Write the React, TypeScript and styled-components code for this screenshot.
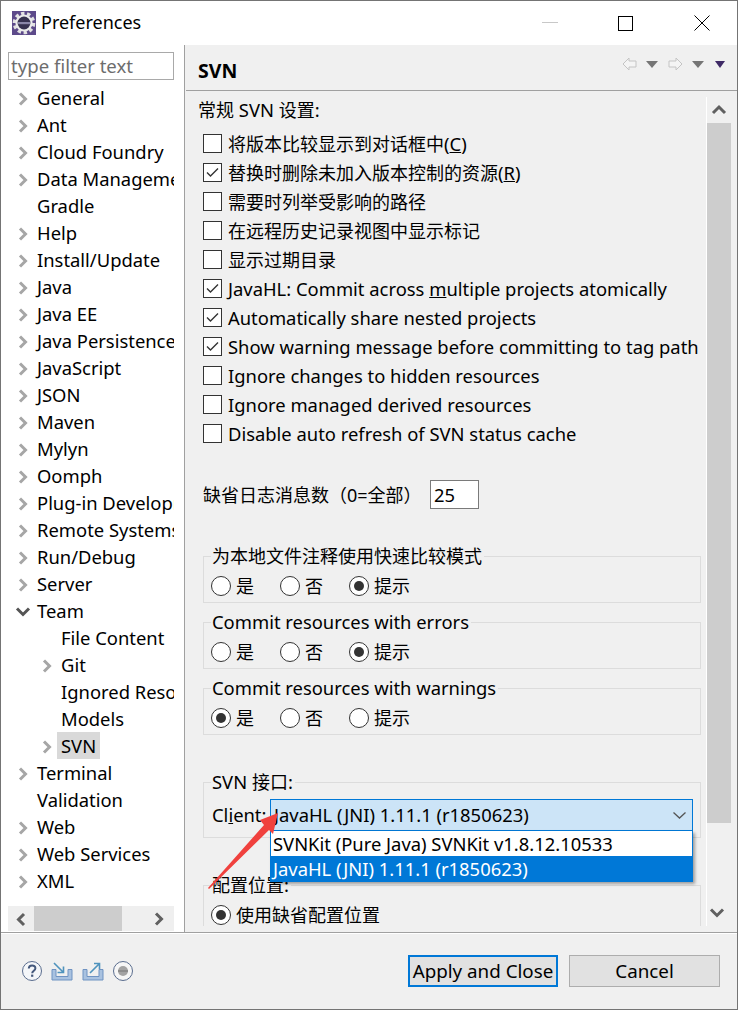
import React from "react";
import styled, { createGlobalStyle } from "styled-components";

const FONT = `"Noto Sans", "Noto Sans CJK SC", sans-serif`;

const GlobalStyle = createGlobalStyle`
    html, body {
        margin: 0;
        padding: 0;
        background: #f0f0f0;
    }
    body {
        font-family: ${FONT};
        font-size: 18.4px;
        line-height: 24px;
        color: #000;
    }
`;

/**
 * Window frame:
 */
const Window = styled.div`
    width: 738px;
    height: 1010px;
    box-sizing: border-box;
    border: 1px solid #747474;
    display: flex;
    flex-direction: column;
    overflow: hidden;
    position: relative;
    background: #f0f0f0;
`,
    TitleBar = styled.div`
    height: 44px;
    flex: none;
    background: #fff;
    display: flex;
    align-items: center;
    padding-left: 11px;
    gap: 5px;
`,
    TitleText = styled.span`
    flex: 1;
    font-size: 18px;
    margin-top: -2px;
`,
    WinButton = styled.div`
    width: 71px;
    height: 44px;
    display: flex;
    align-items: center;
    justify-content: center;
`,
    Body = styled.div`
    flex: 1;
    display: flex;
    min-height: 0;
`,
    // CJK glyphs sit on an 18px em in the dialog, latin runs slightly wider
    Cjk = styled.span`
    font-size: 18px;
`;

/**
 * Left tree panel:
 */
const LeftPanel = styled.div`
    width: 184px;
    flex: none;
    box-sizing: border-box;
    background: #fff;
    border-right: 1px solid #a0a0a0;
    padding: 7px 9px 1px 7px;
    display: flex;
    flex-direction: column;
`,
    FilterInput = styled.input`
    height: 28px;
    flex: none;
    box-sizing: border-box;
    width: 166px;
    border: 1px solid #a9a9a9;
    padding: 0 2px 2px;
    margin: 0;
    font-family: ${FONT};
    font-size: 18.6px;
    outline: none;
    &::placeholder {
        color: #6d6d6d;
        opacity: 1;
    }
`,
    Tree = styled.div`
    flex: 1;
    width: 166px;
    min-height: 0;
    overflow: hidden;
    padding-top: 4px;
`,
    TreeRow = styled.div<{ $level: number }>`
    height: 27px;
    display: flex;
    align-items: center;
    white-space: nowrap;
    padding-left: ${(p) => 10 + p.$level * 24}px;
`,
    TwistySlot = styled.span`
    width: 19px;
    flex: none;
    display: flex;
    align-items: center;
    margin-top: 2px;
`,
    TreeLabel = styled.span<{ $selected?: boolean }>`
    height: 27px;
    line-height: 27px;
    padding: 0 4px;
    margin-left: -4px;
    background: ${(p) => (p.$selected ? "#d9d9d9" : "transparent")};
`,
    HScroll = styled.div`
    height: 25px;
    width: 166px;
    flex: none;
    background: #efefef;
    display: flex;
    align-items: center;
`,
    HScrollButton = styled.div`
    width: 26px;
    flex: none;
    display: flex;
    align-items: center;
    justify-content: center;
`,
    HScrollThumb = styled.div`
    width: 88px;
    height: 100%;
    flex: none;
    background: #cdcdcd;
`,
    HScrollSpace = styled.div`
    flex: 1;
`;

/**
 * Right page:
 */
const RightPanel = styled.div`
    flex: 1;
    min-width: 0;
    display: flex;
    flex-direction: column;
`,
    PageHeader = styled.div`
    height: 46px;
    flex: none;
    box-sizing: border-box;
    border-bottom: 1px solid #a0a0a0;
    margin-left: 1px;
    display: flex;
    align-items: center;
    padding: 0 12px;
`,
    PageTitle = styled.div`
    flex: 1;
    font-size: 19.5px;
    font-weight: 700;
    margin-top: 6px;
`,
    Toolbar = styled.div`
    display: flex;
    align-items: center;
    gap: 10px;
    margin-top: -7px;
`,
    ToolGroup = styled.div`
    display: flex;
    align-items: center;
    gap: 9px;
`,
    ViewMenu = styled.div`
    display: flex;
    margin-left: 1px;
`,
    NavSvg = styled.svg<{ $flip?: boolean }>`
    transform: ${(p) => (p.$flip ? "scaleX(-1)" : "none")};
`,
    PageBody = styled.div`
    flex: 1;
    min-height: 0;
    display: flex;
    padding-bottom: 6px;
`,
    Scroller = styled.div`
    flex: 1;
    min-width: 0;
    overflow: hidden;
    padding: 7px 0 0 13px;
`,
    Heading = styled.div`
    height: 24px;
`,
    CheckList = styled.div`
    margin: 7px 0 0 5px;
`,
    CheckRow = styled.div`
    height: 29px;
    display: flex;
    align-items: center;
    gap: 6px;
    white-space: nowrap;
`,
    CheckBox = styled.span`
    width: 19px;
    height: 19px;
    flex: none;
    box-sizing: border-box;
    background: #fff;
    border: 1px solid #333;
    display: flex;
    align-items: center;
    justify-content: center;
`,
    LogRow = styled.div`
    margin: 32px 0 0 5px;
    display: flex;
    align-items: center;
    height: 29px;
`,
    LogLabel = styled.span`
    width: 227px;
    flex: none;
    white-space: nowrap;
`,
    NumberInput = styled.input`
    width: 49px;
    height: 29px;
    box-sizing: border-box;
    border: 1px solid #7a7a7a;
    padding: 0 3px;
    margin: 0;
    font-family: ${FONT};
    font-size: 18.4px;
    outline: none;
`,
    Groups = styled.div<{ $top: number }>`
    margin: ${(p) => p.$top}px 0 0 5px;
    width: 498px;
    display: flex;
    flex-direction: column;
    gap: 7px;
`,
    Group = styled.fieldset<{ $bottom?: number }>`
    margin: 0;
    padding: 5px 7px ${(p) => p.$bottom ?? 4}px 7px;
    border: 1px solid #dcdcdc;
    min-width: 0;
`,
    GroupLegend = styled.legend`
    padding: 0 2px 0 1px;
    margin-left: 0;
    line-height: 24px;
    white-space: nowrap;
`,
    RadioRow = styled.div`
    display: flex;
    height: 25px;
    align-items: center;
`,
    RadioItem = styled.label<{ $auto?: boolean }>`
    width: ${(p) => (p.$auto ? "auto" : "69px")};
    display: flex;
    align-items: center;
    gap: 5px;
    font-size: 18px;
`,
    RadioDot = styled.span<{ $on?: boolean }>`
    width: 20px;
    height: 20px;
    flex: none;
    box-sizing: border-box;
    border-radius: 50%;
    border: 1px solid #333;
    background: #fff;
    display: flex;
    align-items: center;
    justify-content: center;
    &::after {
        content: "";
        display: ${(p) => (p.$on ? "block" : "none")};
        width: 10px;
        height: 10px;
        border-radius: 50%;
        background: #333;
    }
`,
    ClientRow = styled.div`
    display: flex;
    align-items: center;
    height: 32px;
`,
    ClientLabel = styled.span`
    width: 58px;
    padding-left: 1px;
    flex: none;
    white-space: nowrap;
`,
    ComboWrap = styled.div`
    position: relative;
    width: 423px;
    flex: none;
`,
    Combo = styled.div`
    height: 32px;
    box-sizing: border-box;
    border: 1px solid #0078d7;
    background: #cce4f7;
    display: flex;
    align-items: center;
    justify-content: space-between;
    padding: 0 6px 0 3px;
`,
    DropList = styled.div`
    position: absolute;
    top: 32px;
    left: 0;
    right: 0;
    background: #fff;
    border: 1px solid #0078d7;
    border-top: none;
    box-shadow: 2px 2px 3px rgba(0, 0, 0, 0.35);
    z-index: 2;
`,
    DropItem = styled.div<{ $active?: boolean }>`
    height: 25px;
    line-height: 26px;
    padding-left: 2px;
    background: ${(p) => (p.$active ? "#0078d7" : "#fff")};
    color: ${(p) => (p.$active ? "#fff" : "#000")};
`,
    VScroll = styled.div`
    width: 25px;
    flex: none;
    box-sizing: border-box;
    margin: 6px 6px 0 5px;
    border-left: 1px solid #fff;
    display: flex;
    flex-direction: column;
`,
    VScrollButton = styled.div`
    height: 26px;
    flex: none;
    display: flex;
    align-items: center;
    justify-content: center;
`,
    VScrollThumb = styled.div`
    flex: 1;
    background: #cdcdcd;
    margin-bottom: 77px;
`;

/**
 * Dialog footer:
 */
const Footer = styled.div`
    height: 77px;
    flex: none;
    box-sizing: border-box;
    border-top: 1px solid #a0a0a0;
    box-shadow: inset 0 1px 0 #fff;
    display: flex;
    align-items: center;
    padding: 0 17px 0 21px;
`,
    FooterIcons = styled.div`
    flex: 1;
    display: flex;
    align-items: center;
    gap: 9px;
`,
    Button = styled.button<{ $primary?: boolean }>`
    width: ${(p) => (p.$primary ? 150 : 151)}px;
    height: 32px;
    margin-left: 11px;
    padding: 0;
    box-sizing: border-box;
    background: #e1e1e1;
    border: ${(p) => (p.$primary ? "2px solid #0078d7" : "1px solid #adadad")};
    font-family: ${FONT};
    font-size: 18.8px;
    color: #000;
`,
    ArrowOverlay = styled.svg`
    position: absolute;
    left: 199px;
    top: 804px;
    z-index: 3;
    pointer-events: none;
`,
    Mnemonic = styled.span`
    text-decoration: underline;
`;

/* Small drawings */
const CHEVRON_POINTS = {
    right: "2,1.5 7.5,7 2,12.5",
    left: "10,2 4.5,7.5 10,13",
    down: "-1,3.5 5,9.5 11,3.5",
    up: "1,10 7,4 13,10",
};

const ChevronSvg = styled.svg`
    overflow: visible;
`;

const Chevron = ({ dir = "right", color = "#a6a6a6" }: { dir?: keyof typeof CHEVRON_POINTS; color?: string }) => (
    <ChevronSvg width="14" height="14" viewBox="0 0 14 14">
        <polyline points={CHEVRON_POINTS[dir]} fill="none" stroke={color} strokeWidth="3" />
    </ChevronSvg>
);

const Triangle = ({ color = "#757575", width = 12 }: { color?: string; width?: number }) => (
    <svg width={width} height="7" viewBox="0 0 11 7" preserveAspectRatio="none">
        <polygon points="0,0 11,0 5.5,7" fill={color} />
    </svg>
);

const NavArrow = ({ flip }: { flip?: boolean }) => (
    <NavSvg $flip={flip} width="15" height="14" viewBox="0 0 15 14">
        <polygon points="1,7 7,1 7,4 14,4 14,10 7,10 7,13" fill="#f4f4f4" stroke="#c4c4c4" />
    </NavSvg>
);

const Logo = () => (
    <svg width="24" height="24" viewBox="0 0 24 24">
        <rect width="24" height="24" fill="#5d4a8a" />
        <circle cx="12" cy="12" r="9.6" fill="none" stroke="#e2e2e2" strokeWidth="3.4" strokeDasharray="3.4 2.6" />
        <circle cx="12" cy="12" r="8.6" fill="#ececec" />
        <circle cx="12" cy="12" r="6.4" fill="#36314f" />
        <rect x="5.8" y="11" width="12.4" height="2.2" fill="#8a86a8" />
    </svg>
);

const HelpIcon = () => (
    <svg width="20" height="20" viewBox="0 0 20 20">
        <circle cx="10" cy="10" r="9.5" fill="#f4f6f9" stroke="#5a6d8e" />
        <path d="M6.8 7.6c0-4.2 6.6-4.2 6.6-.3 0 2.5-3.2 2.4-3.2 5" fill="none" stroke="#44587c" strokeWidth="2" />
        <rect x="9.1" y="13.6" width="2.2" height="2.2" fill="#44587c" />
    </svg>
);

const TrayIcon = ({ out }: { out?: boolean }) => (
    <svg width="22" height="20" viewBox="0 0 22 20">
        <path d="M1 8.5h4v7h12v-7h4v10.5H1z" fill="#a9c2e0" stroke="#6f93c2" />
        <path
            d={out ? "M8 12L17 3M12 2.5h5.5V8" : "M3 2l9 9M12.5 5.5V11.5H6.5"}
            fill="none"
            stroke="#4f93bd"
            strokeWidth="1.6"
        />
    </svg>
);

const RecordIcon = () => (
    <svg width="20" height="20" viewBox="0 0 20 20">
        <circle cx="10" cy="10" r="9.5" fill="#f6f6f6" stroke="#5a6d8e" />
        <circle cx="10" cy="10" r="5" fill="#a3a3a3" />
        <rect x="5" y="9" width="10" height="2" fill="#8c8c8c" />
    </svg>
);

const RedArrow = () => (
    <ArrowOverlay width="85" height="90" viewBox="0 0 85 90">
        <polygon points="78,8 60,15 64,20 8,83 9,84 69,25 73,29" fill="#f0413e" />
    </ArrowOverlay>
);

type TreeItem = { label: string; level?: number; twisty?: "right" | "down"; selected?: boolean };

const TREE: TreeItem[] = [
    { label: "General", twisty: "right" },
    { label: "Ant", twisty: "right" },
    { label: "Cloud Foundry", twisty: "right" },
    { label: "Data Management", twisty: "right" },
    { label: "Gradle" },
    { label: "Help", twisty: "right" },
    { label: "Install/Update", twisty: "right" },
    { label: "Java", twisty: "right" },
    { label: "Java EE", twisty: "right" },
    { label: "Java Persistence", twisty: "right" },
    { label: "JavaScript", twisty: "right" },
    { label: "JSON", twisty: "right" },
    { label: "Maven", twisty: "right" },
    { label: "Mylyn", twisty: "right" },
    { label: "Oomph", twisty: "right" },
    { label: "Plug-in Development", twisty: "right" },
    { label: "Remote Systems", twisty: "right" },
    { label: "Run/Debug", twisty: "right" },
    { label: "Server", twisty: "right" },
    { label: "Team", twisty: "down" },
    { label: "File Content", level: 1 },
    { label: "Git", level: 1, twisty: "right" },
    { label: "Ignored Resources", level: 1 },
    { label: "Models", level: 1 },
    { label: "SVN", level: 1, twisty: "right", selected: true },
    { label: "Terminal", twisty: "right" },
    { label: "Validation" },
    { label: "Web", twisty: "right" },
    { label: "Web Services", twisty: "right" },
    { label: "XML", twisty: "right" },
];

const CHECKS: { text: React.ReactNode; on?: boolean }[] = [
    { text: <><Cjk>将版本比较显示到对话框中</Cjk>(<Mnemonic>C</Mnemonic>)</> },
    { text: <><Cjk>替换时删除未加入版本控制的资源</Cjk>(<Mnemonic>R</Mnemonic>)</>, on: true },
    { text: <Cjk>需要时列举受影响的路径</Cjk> },
    { text: <Cjk>在远程历史记录视图中显示标记</Cjk> },
    { text: <Cjk>显示过期目录</Cjk> },
    { text: <>JavaHL: Commit across <Mnemonic>m</Mnemonic>ultiple projects atomically</>, on: true },
    { text: "Automatically share nested projects", on: true },
    { text: "Show warning message before committing to tag path", on: true },
    { text: "Ignore changes to hidden resources" },
    { text: "Ignore managed derived resources" },
    { text: "Disable auto refresh of SVN status cache" },
];

const CHOICE_GROUPS: { legend: React.ReactNode; key: string; selected: number }[] = [
    { key: "annotate", legend: <Cjk>为本地文件注释使用快速比较模式</Cjk>, selected: 2 },
    { key: "errors", legend: "Commit resources with errors", selected: 2 },
    { key: "warnings", legend: "Commit resources with warnings", selected: 0 },
];

const CHOICES = ["是", "否", "提示"];

const App = () => (
    <Window>
        <GlobalStyle />
        <TitleBar>
            <Logo />
            <TitleText>Preferences</TitleText>
            <WinButton>
                <svg width="16" height="2"><rect width="16" height="1" fill="#c8c8c8" /></svg>
            </WinButton>
            <WinButton>
                <svg width="15" height="15"><rect x="0.5" y="0.5" width="14" height="14" fill="none" stroke="#000" /></svg>
            </WinButton>
            <WinButton>
                <svg width="16" height="16"><path d="M.5.5l15 15M15.5.5l-15 15" stroke="#000" /></svg>
            </WinButton>
        </TitleBar>
        <Body>
            <LeftPanel>
                <FilterInput placeholder="type filter text" />
                <Tree>
                    {TREE.map((item) => (
                        <TreeRow key={item.label} $level={item.level ?? 0}>
                            <TwistySlot>
                                {item.twisty && (
                                    <Chevron
                                        dir={item.twisty}
                                        color={item.twisty === "down" ? "#555" : "#a6a6a6"}
                                    />
                                )}
                            </TwistySlot>
                            <TreeLabel $selected={item.selected}>{item.label}</TreeLabel>
                        </TreeRow>
                    ))}
                </Tree>
                <HScroll>
                    <HScrollButton><Chevron dir="left" color="#606060" /></HScrollButton>
                    <HScrollThumb />
                    <HScrollSpace />
                    <HScrollButton><Chevron dir="right" color="#606060" /></HScrollButton>
                </HScroll>
            </LeftPanel>
            <RightPanel>
                <PageHeader>
                    <PageTitle>SVN</PageTitle>
                    <Toolbar>
                        <ToolGroup>
                            <NavArrow />
                            <Triangle />
                        </ToolGroup>
                        <ToolGroup>
                            <NavArrow flip />
                            <Triangle />
                        </ToolGroup>
                        <ViewMenu>
                            <Triangle color="#3f2a66" width={10} />
                        </ViewMenu>
                    </Toolbar>
                </PageHeader>
                <PageBody>
                    <Scroller>
                        <Heading><Cjk>常规</Cjk> SVN <Cjk>设置</Cjk>:</Heading>
                        <CheckList>
                            {CHECKS.map((c, i) => (
                                <CheckRow key={i}>
                                    <CheckBox>
                                        {c.on && (
                                            <svg width="13" height="11" viewBox="0 0 13 11">
                                                <polyline points="1,5.5 4.5,9 12,1.5" fill="none" stroke="#333" strokeWidth="1.4" />
                                            </svg>
                                        )}
                                    </CheckBox>
                                    <span>{c.text}</span>
                                </CheckRow>
                            ))}
                        </CheckList>
                        <LogRow>
                            <LogLabel><Cjk>缺省日志消息数（0=全部）</Cjk></LogLabel>
                            <NumberInput defaultValue="25" />
                        </LogRow>
                        <Groups $top={35}>
                            {CHOICE_GROUPS.map((g) => (
                                <Group key={g.key}>
                                    <GroupLegend>{g.legend}</GroupLegend>
                                    <RadioRow>
                                        {CHOICES.map((c, i) => (
                                            <RadioItem key={c}>
                                                <RadioDot $on={i === g.selected} />
                                                {c}
                                            </RadioItem>
                                        ))}
                                    </RadioRow>
                                </Group>
                            ))}
                        </Groups>
                        <Groups $top={35}>
                            <Group $bottom={6}>
                                <GroupLegend>SVN <Cjk>接口</Cjk>:</GroupLegend>
                                <ClientRow>
                                    <ClientLabel>Cl<Mnemonic>i</Mnemonic>ent:</ClientLabel>
                                    <ComboWrap>
                                        <Combo>
                                            <span>JavaHL (JNI) 1.11.1 (r1850623)</span>
                                            <svg width="13" height="7" viewBox="0 0 13 7">
                                                <polyline points="0.5,0.5 6.5,6 12.5,0.5" fill="none" stroke="#555" strokeWidth="1.3" />
                                            </svg>
                                        </Combo>
                                        <DropList>
                                            <DropItem>SVNKit (Pure Java) SVNKit v1.8.12.10533</DropItem>
                                            <DropItem $active>JavaHL (JNI) 1.11.1 (r1850623)</DropItem>
                                        </DropList>
                                    </ComboWrap>
                                </ClientRow>
                            </Group>
                        </Groups>
                        <Groups $top={35}>
                            <Group>
                                <GroupLegend><Cjk>配置位置</Cjk>:</GroupLegend>
                                <RadioRow>
                                    <RadioItem $auto>
                                        <RadioDot $on />
                                        使用缺省配置位置
                                    </RadioItem>
                                </RadioRow>
                            </Group>
                        </Groups>
                    </Scroller>
                    <VScroll>
                        <VScrollButton><Chevron dir="up" color="#606060" /></VScrollButton>
                        <VScrollThumb />
                        <VScrollButton><Chevron dir="down" color="#606060" /></VScrollButton>
                    </VScroll>
                </PageBody>
            </RightPanel>
        </Body>
        <Footer>
            <FooterIcons>
                <HelpIcon />
                <TrayIcon />
                <TrayIcon out />
                <RecordIcon />
            </FooterIcons>
            <Button $primary>Apply and Close</Button>
            <Button>Cancel</Button>
        </Footer>
        <RedArrow />
    </Window>
);

export default App;
